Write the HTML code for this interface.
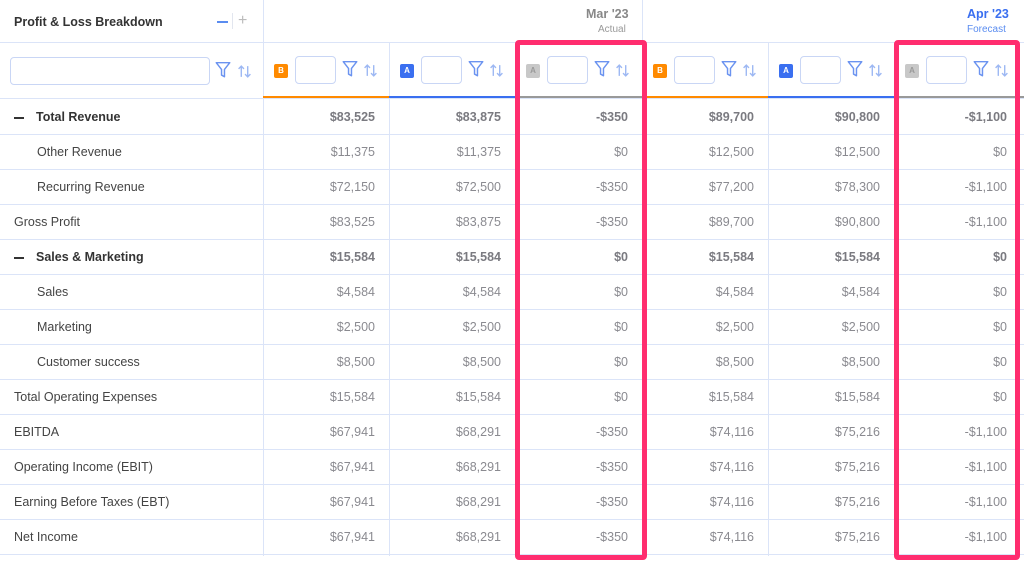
<!DOCTYPE html>
<html><head><meta charset="utf-8"><style>
*{margin:0;padding:0;box-sizing:border-box}
body{width:1024px;height:562px;background:#fff;font-family:"Liberation Sans",sans-serif;position:relative;overflow:hidden;color:#333}
.vl{position:absolute;width:1px;background:#dbe4f8}
.hl{position:absolute;height:1px;background:#dbe4f8;left:0;width:1024px}
.t{position:absolute;font-size:12.5px;white-space:nowrap}
.v{position:absolute;font-size:12.5px;color:#8a8a90;text-align:right;width:110px}
.b{font-weight:bold;color:#7a7a80}
.inp{position:absolute;border:1px solid #c9d6f5;border-radius:4px;background:#fff}
.bd{position:absolute;width:14px;height:14px;border-radius:2px;color:#fff;font-size:8px;font-weight:bold;text-align:center;line-height:14px}
.ic{position:absolute}
.pink{position:absolute;border:5px solid #ff2d6f;border-radius:4px}
</style></head><body>
<div class="t" style="left:14px;top:15px;font-weight:bold;font-size:12.5px;color:#333">Profit &amp; Loss Breakdown</div>
<div style="position:absolute;left:217px;top:21px;width:11px;height:2px;background:#5a8cf0"></div>
<div style="position:absolute;left:232px;top:13px;width:1px;height:16px;background:#e2e6ef"></div>
<div class="t" style="left:238px;top:12px;color:#bbb;font-size:16px">+</div>
<div class="t" style="left:586px;top:7px;font-weight:bold;color:#888;font-size:12.5px">Mar '23</div>
<div class="t" style="left:598px;top:24px;color:#999;font-size:10px">Actual</div>
<div class="t" style="left:967px;top:7px;font-weight:bold;color:#3a6ff0;font-size:12.5px">Apr '23</div>
<div class="t" style="left:967px;top:24px;color:#5a8cf0;font-size:10px">Forecast</div>

<div class="vl" style="left:263px;top:0;height:556px"></div>
<div class="vl" style="left:389px;top:42px;height:514px"></div>
<div class="vl" style="left:515px;top:42px;height:514px"></div>
<div class="vl" style="left:642px;top:0;height:556px"></div>
<div class="vl" style="left:768px;top:42px;height:514px"></div>
<div class="vl" style="left:894px;top:42px;height:514px"></div>
<div class="hl" style="top:42px"></div>
<div class="hl" style="top:98px"></div>

<div style="position:absolute;left:263px;top:96px;width:126px;height:2px;background:#ff8a00"></div>
<div style="position:absolute;left:389px;top:96px;width:126px;height:2px;background:#3a6ff0"></div>
<div style="position:absolute;left:515px;top:96px;width:127px;height:2px;background:#999"></div>
<div style="position:absolute;left:642px;top:96px;width:126px;height:2px;background:#ff8a00"></div>
<div style="position:absolute;left:768px;top:96px;width:126px;height:2px;background:#3a6ff0"></div>
<div style="position:absolute;left:894px;top:96px;width:130px;height:2px;background:#999"></div>

<div class="inp" style="left:10px;top:57px;width:200px;height:28px"></div>
<div id="hdr"></div>
<div id="rows"></div>

<div class="pink" style="left:515px;top:40px;width:132px;height:520px"></div>
<div class="pink" style="left:894px;top:40px;width:126px;height:520px"></div>

<script>
var fsvg='<svg width="16" height="18" viewBox="0 0 14 16"><path d="M1 1.5H13L8.3 7.5V14L5.7 12.5V7.5Z" fill="none" stroke="#6b93f0" stroke-width="1.3" stroke-linejoin="round"/></svg>';
var ssvg='<svg width="15" height="15" viewBox="0 0 14 14"><path d="M4 12V2M1.5 4.5L4 2L6.5 4.5M10 2V12M7.5 9.5L10 12L12.5 9.5" fill="none" stroke="#9db8f3" stroke-width="1.3"/></svg>';
var h='';
h+='<div class="ic" style="left:215px;top:61px">'+fsvg+'</div><div class="ic" style="left:237px;top:64px">'+ssvg+'</div>';
var cols=[263,389,515,642,768,894];
var bad=[['B','#ff8a00'],['A','#3a6ff0'],['A','#c8c8c8'],['B','#ff8a00'],['A','#3a6ff0'],['A','#c8c8c8']];
cols.forEach(function(x,i){
 h+='<div class="bd" style="left:'+(x+11)+'px;top:64px;background:'+bad[i][1]+';'+(i%3==2?'color:#999':'')+'">'+bad[i][0]+'</div>';
 h+='<div class="inp" style="left:'+(x+32)+'px;top:56px;width:41px;height:28px"></div>';
 h+='<div class="ic" style="left:'+(x+79)+'px;top:60px">'+fsvg+'</div><div class="ic" style="left:'+(x+100)+'px;top:63px">'+ssvg+'</div>';
});
document.getElementById('hdr').innerHTML=h;
var data=[
['Total Revenue',2,['$83,525','$83,875','-$350','$89,700','$90,800','-$1,100']],
['Other Revenue',1,['$11,375','$11,375','$0','$12,500','$12,500','$0']],
['Recurring Revenue',1,['$72,150','$72,500','-$350','$77,200','$78,300','-$1,100']],
['Gross Profit',0,['$83,525','$83,875','-$350','$89,700','$90,800','-$1,100']],
['Sales &amp; Marketing',2,['$15,584','$15,584','$0','$15,584','$15,584','$0']],
['Sales',1,['$4,584','$4,584','$0','$4,584','$4,584','$0']],
['Marketing',1,['$2,500','$2,500','$0','$2,500','$2,500','$0']],
['Customer success',1,['$8,500','$8,500','$0','$8,500','$8,500','$0']],
['Total Operating Expenses',0,['$15,584','$15,584','$0','$15,584','$15,584','$0']],
['EBITDA',0,['$67,941','$68,291','-$350','$74,116','$75,216','-$1,100']],
['Operating Income (EBIT)',0,['$67,941','$68,291','-$350','$74,116','$75,216','-$1,100']],
['Earning Before Taxes (EBT)',0,['$67,941','$68,291','-$350','$74,116','$75,216','-$1,100']],
['Net Income',0,['$67,941','$68,291','-$350','$74,116','$75,216','-$1,100']]];
var rEnds=[375,501,628,754,880,1007];
var r='';
data.forEach(function(d,i){
 var y=99+i*35;
 r+='<div class="hl" style="top:'+(y+35)+'px;width:1024px"></div>';
 var ty=y+11;
 if(d[1]==2){
  r+='<div style="position:absolute;left:14px;top:'+(y+18)+'px;width:10px;height:2px;background:#333"></div>';
  r+='<div class="t" style="left:36px;top:'+ty+'px;font-weight:bold;color:#333">'+d[0]+'</div>';
 } else r+='<div class="t" style="left:'+(d[1]?37:14)+'px;top:'+ty+'px;color:#444">'+d[0]+'</div>';
 d[2].forEach(function(v,j){
  r+='<div class="v'+(d[1]==2?' b':'')+'" style="left:'+(rEnds[j]-110)+'px;top:'+ty+'px">'+v+'</div>';
 });
});
document.getElementById('rows').innerHTML=r;
</script>
</body></html>
